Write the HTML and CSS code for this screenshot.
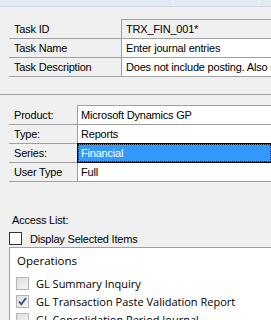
FILE: index.html
```html
<!DOCTYPE html>
<html>
<head>
<meta charset="utf-8">
<link rel="stylesheet" href="styles.css">
</head>
<body>
<div class="page">
  <div class="strip"><div class="sc sc1"></div><div class="sc sc2"></div><div class="sc sc3"></div></div>

  <div class="task-grid">
    <div class="row first"><div class="lbl">Task ID</div><div class="val ro">TRX_FIN_001*</div></div>
    <div class="row"><div class="lbl">Task Name</div><div class="val">Enter journal entries</div></div>
    <div class="row"><div class="lbl">Task Description</div><div class="val">Does not include posting. Also requires access to the</div></div>
  </div>

  <div class="sep"></div>

  <div class="prop-grid">
    <div class="row first"><div class="lbl">Product:</div><div class="val">Microsoft Dynamics GP</div></div>
    <div class="row"><div class="lbl">Type:</div><div class="val">Reports</div></div>
    <div class="row"><div class="lbl">Series:</div><div class="val sel"><span class="focus">Financial</span></div></div>
    <div class="row"><div class="lbl">User Type</div><div class="val">Full</div></div>
  </div>

  <div class="access-label">Access List:</div>
  <div class="display-row"><span class="cb"></span><span>Display Selected Items</span></div>

  <div class="listbox">
    <div class="group">Operations</div>
    <div class="item"><span class="lcb"></span><span>GL Summary Inquiry</span></div>
    <div class="item"><span class="lcb"><svg width="11" height="11" viewBox="0 0 11 11"><path d="M2 5.5 L4.3 8.3 L9 2" fill="none" stroke="#3b4f7a" stroke-width="1.8"/></svg></span><span>GL Transaction Paste Validation Report</span></div>
    <div class="item"><span class="lcb"></span><span>GL Consolidation Period Journal</span></div>
  </div>
</div>
</body>
</html>
```

FILE: styles.css
```css
html, body { margin: 0; padding: 0; }
body {
  background: #f0f0f0;
  font-family: "Liberation Sans", Arial, sans-serif;
  font-size: 11px;
  color: #000;
}
.page { width: 271px; height: 320px; overflow: hidden; }

.strip { display: flex; height: 6px; background: #e1eaf4; border-bottom: 1px solid #cfd6de; }
.sc1 { width: 173px; }
.sc2 { width: 84px; border-left: 1px solid #fff; }
.sc3 { flex: 1; border-left: 1px solid #fff; }

.task-grid { margin: 12px 0 0 9px; letter-spacing: -0.2px; }
.row { display: flex; height: 19px; box-sizing: border-box; }
.row.first { height: 20px; }
.lbl {
  box-sizing: border-box;
  border-bottom: 1px solid #a0a0a0;
  padding-left: 5px;
  line-height: 18px;
  white-space: nowrap;
}
.row.first .lbl { border-top: 1px solid transparent; }
.val {
  flex: 1;
  box-sizing: border-box;
  background: #fff;
  border-left: 1px solid #a0a0a0;
  border-bottom: 1px solid #a0a0a0;
  line-height: 18px;
  white-space: nowrap;
  overflow: hidden;
}
.row.first .val { border-top: 1px solid #a0a0a0; }
.val.ro { background: #f0f0f0; }
.task-grid .lbl { width: 112px; }
.task-grid .val { padding-left: 4px; }

.sep { margin-top: 17px; height: 1px; background: #a0a0a0; }

.prop-grid { margin: 10px 0 0 9px; letter-spacing: -0.2px; }
.prop-grid .lbl { width: 68px; }
.prop-grid .val { padding-left: 3px; }
.val.sel {
  background: #3399ff;
  color: #fff;
  border-left: 1px solid #000;
  border-bottom: 1px solid #000;
  box-shadow: 0 -1px 0 #000;
  padding: 0;
}
.focus {
  display: block;
  height: 100%;
  box-sizing: border-box;
  outline: 1px dotted #1a1a1a;
  outline-offset: -1px;
  padding-left: 3px;
}

.access-label { margin-top: 32px; padding-left: 12px; line-height: 13px; letter-spacing: -0.2px; }
.display-row {
  display: flex; align-items: center; gap: 8px;
  margin-top: 5px; padding-left: 9px; height: 13px; letter-spacing: -0.2px;
}
.cb { width: 13px; height: 13px; box-sizing: border-box; border: 1px solid #333; background: #fff; flex: none; }

.listbox {
  margin: 2px 0 0 9px;
  height: 100px;
  background: #fff;
  border: 1px solid #a0a0a0;
  border-right: none;
  font-family: "Open Sans", "Noto Sans", sans-serif;
  font-size: 11px;
}
.group { padding: 5px 0 0 7px; line-height: 16px; font-size: 11.5px; }
.item { display: flex; align-items: center; gap: 7px; height: 18px; padding-left: 6px; white-space: nowrap; }
.group + .item { margin-top: 5px; }
.lcb {
  width: 13px; height: 13px; box-sizing: border-box; flex: none;
  border: 1px solid #b4b4b4;
  background: linear-gradient(135deg, #dedede, #f6f6f6);
  display: flex; align-items: center; justify-content: center;
}
```
